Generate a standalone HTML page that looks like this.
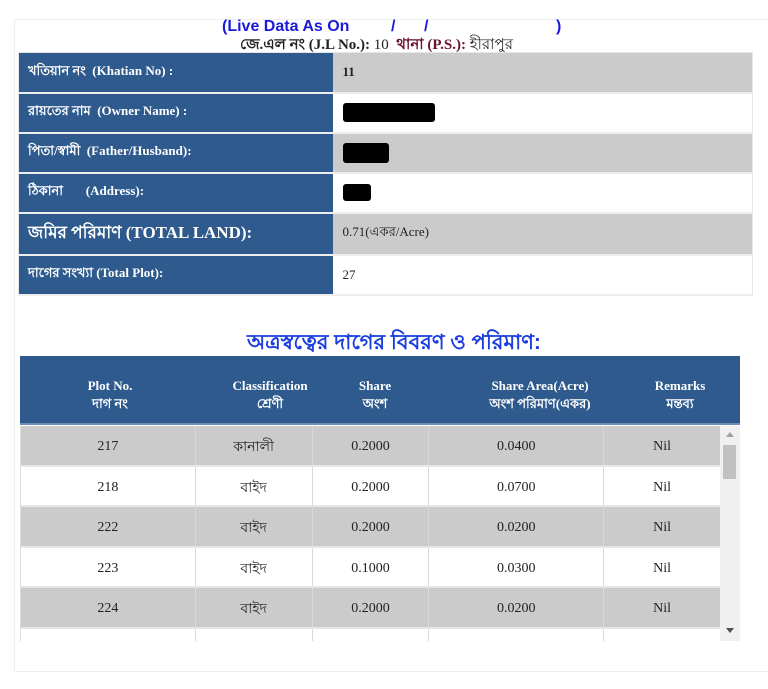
<!DOCTYPE html>
<html><head><meta charset="utf-8"><style>
*{margin:0;padding:0;box-sizing:border-box}
body{width:768px;height:689px;background:#fff;font-family:"Liberation Serif",serif;position:relative;overflow:hidden}
.panel{position:absolute;left:14px;top:19px;width:760px;height:653px;border:1px solid #eee}
.live{position:absolute;top:18px;font:bold 16px "Liberation Sans",sans-serif;color:#1a1ad8;white-space:pre}
.jl{position:absolute;left:240px;top:33px;font-size:15px;color:#222;white-space:nowrap}
.jl .ps{color:#6b1030}
table.info{position:absolute;left:18px;top:52px;width:735px;border-collapse:collapse;border:1px solid #e6e6e6}
table.info td{height:40px;border-bottom:2px solid #eee;font-size:13px}
table.info td.l{width:314px;background:#2e5a8e;color:#fff;font-weight:bold;padding-left:9px}
table.info td.v{padding-left:10px;color:#222}
.g td.v{background:#cbcbcb}
.blk{display:inline-block;background:#000;height:17px;border-radius:3px;vertical-align:middle}
.title{position:absolute;left:0;width:788px;top:326px;text-align:center;font:bold 21px "Liberation Sans",sans-serif;color:#1a3ee0}
.hdr{position:absolute;left:20px;top:356px;width:720px;height:69px;background:#2e5a8e;color:#fff;font-weight:bold;font-size:13px;border-bottom:2px solid #6d8db5}
.hdr div{position:absolute;top:21px;text-align:center;line-height:18px}
.rows{position:absolute;left:20px;top:426px;width:700px;height:215px;overflow:hidden;border-left:1px solid #ddd}
.row{height:40.5px;display:flex;font-size:14px;color:#222;border-bottom:2px solid #e6e6e6}
.row div{border-right:1px solid #d8d8d8;display:flex;align-items:center;justify-content:center;padding-top:4px}
.row.g{background:#cbcbcb}
.sb{position:absolute;left:720px;top:426px;width:20px;height:215px;background:#f0f0f0}
.sb .th{position:absolute;left:3px;top:19px;width:13px;height:34px;background:#c1c1c1}
</style></head><body>
<div class="panel"></div>
<div class="live" style="left:222px">(Live Data As On</div>
<div class="live" style="left:391px">/</div>
<div class="live" style="left:424px">/</div>
<div class="live" style="left:556px">)</div>
<div class="jl"><b>জে.এল নং</b> <b>(J.L No.):</b> 10 &nbsp;<b class="ps">থানা (P.S.):</b> হীরাপুর</div>
<table class="info">
<tr class="g"><td class="l">খতিয়ান নং &nbsp;(Khatian No) :</td><td class="v"><b>11</b></td></tr>
<tr><td class="l">রায়তের নাম &nbsp;(Owner Name) :</td><td class="v"><span class="blk" style="width:92px;height:19px"></span></td></tr>
<tr class="g"><td class="l">পিতা/স্বামী &nbsp;(Father/Husband):</td><td class="v"><span class="blk" style="width:46px;height:20px"></span></td></tr>
<tr><td class="l">ঠিকানা &nbsp;&nbsp;&nbsp;&nbsp;&nbsp;&nbsp;(Address):</td><td class="v"><span class="blk" style="width:28px"></span></td></tr>
<tr class="g"><td class="l" style="font-size:17px;height:42px">জমির পরিমাণ (TOTAL LAND):</td><td class="v">0.71(একর/Acre)</td></tr>
<tr><td class="l">দাগের সংখ্যা (Total Plot):</td><td class="v">27</td></tr>
</table>
<div class="title">অত্রস্বত্বের দাগের বিবরণ ও পরিমাণ:</div>
<div class="hdr">
<div style="left:50px;width:80px">Plot No.<br>দাগ নং</div>
<div style="left:190px;width:120px">Classification<br>শ্রেণী</div>
<div style="left:330px;width:50px">Share<br>অংশ</div>
<div style="left:440px;width:160px">Share Area(Acre)<br>অংশ পরিমাণ(একর)</div>
<div style="left:620px;width:80px">Remarks<br>মন্তব্য</div>
</div>
<div class="rows">
<div class="row g"><div style="width:175px">217</div><div style="width:117px">কানালী</div><div style="width:117px">0.2000</div><div style="width:175px">0.0400</div><div style="width:116px;border:0">Nil</div></div>
<div class="row"><div style="width:175px">218</div><div style="width:117px">বাইদ</div><div style="width:117px">0.2000</div><div style="width:175px">0.0700</div><div style="width:116px;border:0">Nil</div></div>
<div class="row g"><div style="width:175px">222</div><div style="width:117px">বাইদ</div><div style="width:117px">0.2000</div><div style="width:175px">0.0200</div><div style="width:116px;border:0">Nil</div></div>
<div class="row"><div style="width:175px">223</div><div style="width:117px">বাইদ</div><div style="width:117px">0.1000</div><div style="width:175px">0.0300</div><div style="width:116px;border:0">Nil</div></div>
<div class="row g"><div style="width:175px">224</div><div style="width:117px">বাইদ</div><div style="width:117px">0.2000</div><div style="width:175px">0.0200</div><div style="width:116px;border:0">Nil</div></div>
<div class="row"><div style="width:175px"></div><div style="width:117px"></div><div style="width:117px"></div><div style="width:175px"></div><div style="width:116px;border:0"></div></div>
</div>
<div class="sb"><div class="th"></div>
<div style="position:absolute;left:6px;top:6px;border:4px solid transparent;border-bottom:5px solid #a0a0a0;border-top:0"></div>
<div style="position:absolute;left:6px;top:202px;border:4px solid transparent;border-top:5px solid #505050;border-bottom:0"></div>
</div>
</body></html>
